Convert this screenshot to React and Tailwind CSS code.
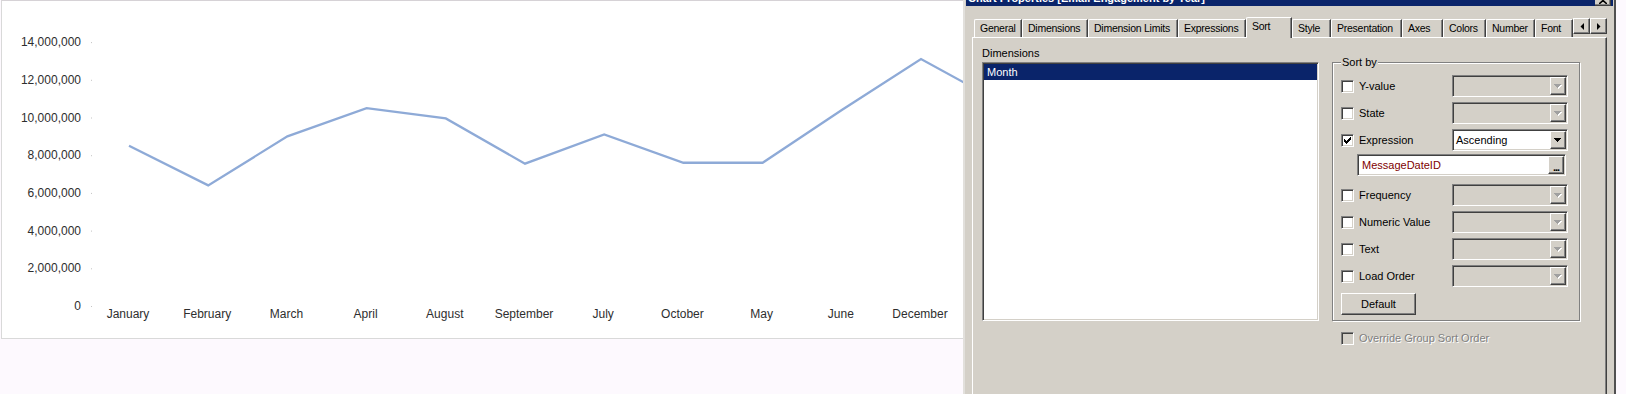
import React from 'react';

// chart data: values in millions, in the order the chart shows them
const months = ['January', 'February', 'March', 'April', 'August', 'September', 'July', 'October', 'May', 'June', 'December'];
const values = [8.5, 6.4, 9.0, 10.5, 9.95, 7.55, 9.1, 7.6, 7.6, 10.4, 13.1, 10.8];
const yTicks = [0, 2, 4, 6, 8, 10, 12, 14];

const yOf = (v) => 306 - (v / 2) * 37.7;
const xOf = (i) => 129 + 79.2 * i;

const sunken =
  'border border-t-[#808080] border-l-[#808080] border-b-white border-r-white shadow-[inset_1px_1px_0_#404040,inset_-1px_-1px_0_#d4d0c8]';
const raised =
  'border border-t-white border-l-white border-b-[#404040] border-r-[#404040] shadow-[inset_-1px_-1px_0_#808080]';

const ChartBox = () => {
  const points = values.map((v, i) => `${xOf(i)},${yOf(v)}`).join(' ');
  return (
    <div className="h-[339px] bg-white border-t border-l border-b border-t-[#d6d2d6] border-l-[#d9d9d9] border-b-[#d9d9d9] overflow-hidden">
      <svg width="961" height="337" className="block">
        <g transform="translate(-2 -1)" fontFamily="Liberation Sans, Arial, sans-serif" fontSize="12" fill="#2e2e2e">
          {yTicks.map((v) => (
            <g key={v}>
              <text x="81" y={yOf(v) + 4} textAnchor="end">
                {v === 0 ? '0' : `${v},000,000`}
              </text>
              <rect x="91" y={yOf(v)} width="1" height="1" fill="#c4c4c4" />
            </g>
          ))}
          {months.map((m, i) => (
            <text key={m} x={xOf(i) - 1} y="318" textAnchor="middle">
              {m}
            </text>
          ))}
          <polyline points={points} fill="none" stroke="#8eaad7" strokeWidth="2.3" strokeLinejoin="miter" />
        </g>
      </svg>
    </div>
  );
};

const DownArrow = ({ disabled }) => (
  <svg width="8" height="5" className="block">
    {disabled && (
      <g fill="#ffffff">
        <rect x="1" y="1" width="7" height="1" />
        <rect x="2" y="2" width="5" height="1" />
        <rect x="3" y="3" width="3" height="1" />
        <rect x="4" y="4" width="1" height="1" />
      </g>
    )}
    <g fill={disabled ? '#a0a0a0' : '#000000'}>
      <rect x="0" y="0" width="7" height="1" />
      <rect x="1" y="1" width="5" height="1" />
      <rect x="2" y="2" width="3" height="1" />
      <rect x="3" y="3" width="1" height="1" />
    </g>
  </svg>
);

const Combo = ({ text, disabled }) => (
  <div className={`w-[116px] h-[22px] flex p-[1px] ${sunken} ${disabled ? 'bg-[#d4d0c8]' : 'bg-white'}`}>
    <div className="flex-1 pl-[2px] pt-[1px] text-[11px] leading-[16px] text-black whitespace-nowrap">{text}</div>
    <div className={`w-[16px] h-full bg-[#d4d0c8] flex items-center justify-center ${raised}`}>
      <DownArrow disabled={disabled} />
    </div>
  </div>
);

const CheckMark = () => (
  <svg width="7" height="7" className="block">
    {[2, 3, 4, 3, 2, 1, 0].map((y, x) => (
      <rect key={x} x={x} y={y} width="1" height="3" fill="#000" />
    ))}
  </svg>
);

const Checkbox = ({ checked, disabled }) => (
  <div
    className={`w-[13px] h-[13px] shrink-0 flex items-center justify-center ${sunken} ${
      disabled ? 'bg-[#d4d0c8]' : 'bg-white'
    }`}
  >
    {checked && <CheckMark />}
  </div>
);

const SortRow = ({ label, checked, combo, disabled = true, className = '' }) => (
  <div className={`flex items-center justify-between h-[22px] ${className}`}>
    <div className="flex items-center gap-[5px]">
      <Checkbox checked={checked} />
      <span className="text-[11px] leading-[13px] text-black">{label}</span>
    </div>
    <Combo text={combo} disabled={disabled} />
  </div>
);

const tabs = [
  { name: 'General', w: 'w-[48px]' },
  { name: 'Dimensions', w: 'w-[66px]' },
  { name: 'Dimension Limits', w: 'w-[90px]' },
  { name: 'Expressions', w: 'w-[68px]' },
  { name: 'Sort', w: 'w-[46px]', active: true },
  { name: 'Style', w: 'w-[39px]' },
  { name: 'Presentation', w: 'w-[71px]' },
  { name: 'Axes', w: 'w-[41px]' },
  { name: 'Colors', w: 'w-[43px]' },
  { name: 'Number', w: 'w-[49px]' },
  { name: 'Font', w: 'w-[38px]' },
];

const Tab = ({ name, w, active }) => (
  <div
    className={`${w} shrink-0 border-t border-l border-r border-t-white border-l-white border-r-[#404040] rounded-tl-[2px] shadow-[inset_-1px_0_0_#808080] pl-[5px] pt-[2px] text-[10.5px] tracking-[-0.25px] leading-[13px] text-black whitespace-nowrap overflow-hidden bg-[#d4d0c8] ${
      active ? 'h-[21px] -mb-px relative z-10' : 'h-[18px]'
    }`}
  >
    {name}
  </div>
);

const ScrollArrow = ({ dir }) => (
  <div className={`self-start mt-px w-[17px] h-[16px] shrink-0 bg-[#d4d0c8] flex items-center justify-center ${raised}`}>
    <svg width="4" height="7" className="block">
      {dir === 'left' ? (
        <path d="M4 0V7L0.5 3.5Z" fill="#000" />
      ) : (
        <path d="M0 0V7L3.5 3.5Z" fill="#000" />
      )}
    </svg>
  </div>
);

const Dialog = () => (
  <div className="w-[653px] shrink-0 h-full flex flex-col bg-[#d4d0c8] border-l-2 border-l-[#e2e0dc] border-r-2 border-r-[#505050]">
    {/* title bar, mostly scrolled off the top */}
    <div className="h-[6px] mx-px bg-[#0a246a] flex justify-between overflow-hidden">
      <span className="pl-[2px] -mt-[8px] text-[11px] leading-[13px] font-bold text-white whitespace-nowrap">
        Chart Properties [Email Engagement by Year]
      </span>
      <div className="mr-[2px] w-[16px] h-[6px] bg-[#d4d0c8] overflow-hidden flex justify-center border-r border-b border-r-[#404040] border-b-[#404040] shadow-[inset_-1px_-1px_0_#808080]">
        <svg width="8" height="7" className="block -mt-[3px]">
          <path d="M0 0L8 7M8 0L0 7" stroke="#000" strokeWidth="1.6" />
        </svg>
      </div>
    </div>

    <div className="mt-[11px] h-[20px] ml-[9px] flex items-end relative z-10">
      {tabs.map((t) => (
        <Tab key={t.name} {...t} />
      ))}
      <ScrollArrow dir="left" />
      <ScrollArrow dir="right" />
    </div>

    <div className="mx-[7px] flex-1 flex border-t border-l border-r border-t-white border-l-white border-r-[#404040] shadow-[inset_-1px_0_0_#808080] pt-[9px] pl-[9px]">
      <div className="w-[337px] shrink-0">
        <div className="h-[13px] mb-[2px] text-[11px] leading-[13px] text-black">Dimensions</div>
        <div className={`h-[259px] bg-white p-px ${sunken}`}>
          <div className="h-[16px] bg-[#0a246a] text-white pl-[3px] text-[11px] leading-[16px]">Month</div>
        </div>
      </div>

      <div className="ml-[13px] pt-[15px]">
        <div className="relative w-[248px] h-[259px] border border-[#808080] shadow-[inset_1px_1px_0_#fff,1px_1px_0_#fff] pt-[12px] pl-[8px] pr-[11px]">
          <span className="absolute -top-[7px] left-[8px] px-px bg-[#d4d0c8] text-[11px] leading-[13px] text-black">
            Sort by
          </span>
          <SortRow label="Y-value" />
          <SortRow label="State" className="mt-[5px]" />
          <SortRow label="Expression" checked combo="Ascending" disabled={false} className="mt-[5px]" />
          <div className={`mt-[3px] ml-[16px] w-[209px] h-[22px] bg-white flex p-px ${sunken}`}>
            <div className="flex-1 pl-[3px] pt-px text-[11px] leading-[16px] text-[#800000]">MessageDateID</div>
            <div className={`w-[16px] h-full bg-[#d4d0c8] flex items-end justify-center pb-[2px] ${raised}`}>
              <span className="text-[11px] leading-[8px] font-bold text-black tracking-[-1px]">...</span>
            </div>
          </div>
          <SortRow label="Frequency" className="mt-[8px]" />
          <SortRow label="Numeric Value" className="mt-[5px]" />
          <SortRow label="Text" className="mt-[5px]" />
          <SortRow label="Load Order" className="mt-[5px]" />
          <button
            className={`mt-[6px] w-[75px] h-[22px] bg-[#d4d0c8] text-[11px] leading-[13px] text-black flex items-center justify-center ${raised}`}
          >
            Default
          </button>
        </div>
        <div className="mt-[11px] ml-[9px] h-[13px] flex items-center gap-[5px]">
          <Checkbox disabled />
          <span className="text-[11px] leading-[13px] text-[#808080] [text-shadow:1px_1px_0_#fff]">
            Override Group Sort Order
          </span>
        </div>
      </div>
    </div>
  </div>
);

export default function App() {
  return (
    <div className="w-[1626px] h-[394px] flex overflow-hidden bg-[#fdf9fe] font-['Liberation_Sans',Arial,sans-serif]">
      <div className="w-[963px] shrink-0 pl-px">
        <ChartBox />
      </div>
      <Dialog />
      <div className="flex-1" />
    </div>
  );
}
